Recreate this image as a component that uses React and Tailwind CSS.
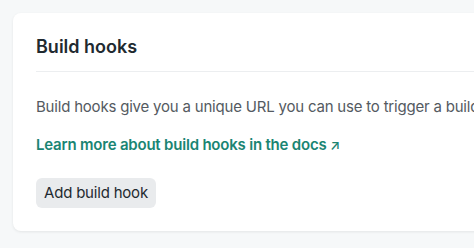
export default function App() {
  return (
    <div className="min-h-[248px] w-[474px] overflow-hidden bg-[#f6f8f9] pt-[13px] pl-[13px]" style={{ fontFamily: "Inter, 'Noto Sans', sans-serif" }}>
      <div className="w-[500px] rounded-l-lg bg-white pl-[23px] pt-[20px] pb-[23px] shadow-[0_1px_3px_rgba(0,0,0,0.08)]">
        <h2 className="border-b border-[#eceef0] pb-[10px] text-[18px] leading-7 font-semibold text-[#1f2a30]">
          Build hooks
        </h2>
        <p className="mt-[23px] whitespace-nowrap text-[15px] leading-6 tracking-[-0.2px] text-[#545a61]">
          Build hooks give you a unique URL you can use to trigger a build
        </p>
        <a href="#" className="mt-[14px] block whitespace-nowrap text-[15px] leading-6 font-semibold tracking-[-0.2px] text-[#1a8573]">
          Learn more about build hooks in the docs <span className="text-[13px]">↗</span>
        </a>
        <button className="mt-[21px] h-[30px] rounded-md bg-[#e9ebed] px-2 text-[15px] tracking-[-0.2px] text-[#1f2a30]">
          Add build hook
        </button>
      </div>
    </div>
  );
}
